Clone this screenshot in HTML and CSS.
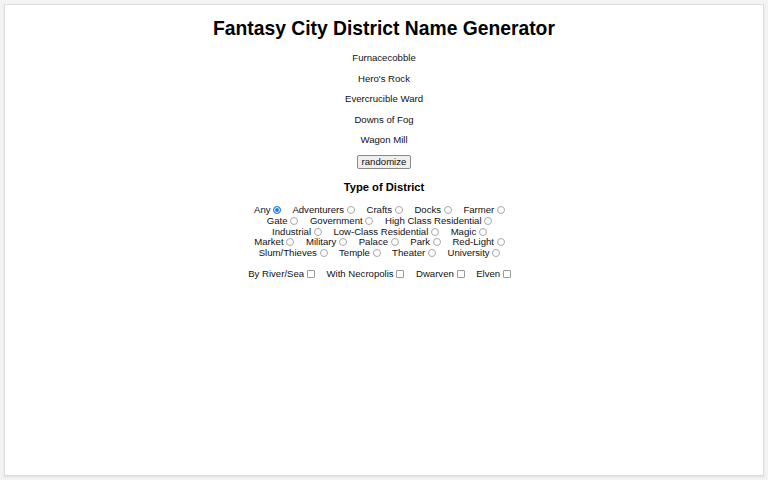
FILE: index.html
```html
<!DOCTYPE html>
<html lang="en">
<head>
<meta charset="utf-8">
<title>Fantasy City District Name Generator</title>
<link rel="stylesheet" href="styles.css">
</head>
<body>
<main class="card">
  <h1 class="title">Fantasy City District Name Generator</h1>
  <div class="names">
    <p class="name">Furnacecobble</p>
    <p class="name">Hero's Rock</p>
    <p class="name">Evercrucible Ward</p>
    <p class="name">Downs of Fog</p>
    <p class="name">Wagon Mill</p>
  </div>
  <p class="actions"><button type="button" class="btn">randomize</button></p>
  <h3 class="section">Type of District</h3>
  <form class="options">
    <div class="types">
      <label class="opt">Any <input type="radio" name="type" checked></label>
      <label class="opt">Adventurers <input type="radio" name="type"></label>
      <label class="opt">Crafts <input type="radio" name="type"></label>
      <label class="opt">Docks <input type="radio" name="type"></label>
      <label class="opt">Farmer <input type="radio" name="type"></label>
      <label class="opt">Gate <input type="radio" name="type"></label>
      <label class="opt">Government <input type="radio" name="type"></label>
      <label class="opt">High Class Residential <input type="radio" name="type"></label>
      <label class="opt">Industrial <input type="radio" name="type"></label>
      <label class="opt">Low-Class Residential <input type="radio" name="type"></label>
      <label class="opt">Magic <input type="radio" name="type"></label>
      <label class="opt">Market <input type="radio" name="type"></label>
      <label class="opt">Military <input type="radio" name="type"></label>
      <label class="opt">Palace <input type="radio" name="type"></label>
      <label class="opt">Park <input type="radio" name="type"></label>
      <label class="opt">Red-Light <input type="radio" name="type"></label>
      <label class="opt">Slum/Thieves <input type="radio" name="type"></label>
      <label class="opt">Temple <input type="radio" name="type"></label>
      <label class="opt">Theater <input type="radio" name="type"></label>
      <label class="opt">University <input type="radio" name="type"></label>
    </div>
    <p class="flags">
      <label class="opt">By River/Sea <input type="checkbox"></label>
      <label class="opt">With Necropolis <input type="checkbox"></label>
      <label class="opt">Dwarven <input type="checkbox"></label>
      <label class="opt">Elven <input type="checkbox"></label>
    </p>
  </form>
</main>
</body>
</html>
```

FILE: styles.css
```css
html, body {
  height: 100%;
}

body {
  margin: 0;
  padding: 4px;
  box-sizing: border-box;
  background: #f3f3f3;
  font-family: "Liberation Sans", Arial, sans-serif;
  font-size: 9.6px;
  color: #111;
}

.card {
  height: 100%;
  box-sizing: border-box;
  background: #fff;
  border: 1px solid #dcdcdc;
  box-shadow: 0 1px 2px rgba(0, 0, 0, 0.08);
  text-align: center;
  overflow: hidden;
}

.title {
  font-size: 19.3px;
  margin: 13px 0 12px;
  color: #000;
}

.name {
  margin: 9.6px 0;
}

.actions {
  margin: 9.6px 0;
}

.btn {
  font-family: inherit;
  font-size: 9.6px;
  color: #111;
  background: #efefef;
  border: 1px solid #8a8a8a;
  border-radius: 2px;
  padding: 1px 4px;
  line-height: 10px;
}

.section {
  font-size: 11.2px;
  margin: 12px 0 12px;
  color: #000;
}

.options {
  margin: 0;
}

.types {
  width: 266px;
  margin: 0 auto;
  line-height: 10.8px;
}

.opt {
  white-space: nowrap;
  margin-right: 8px;
}

/* small hand-drawn radio and checkbox controls */
.opt input {
  -webkit-appearance: none;
  appearance: none;
  box-sizing: border-box;
  width: 8px;
  height: 8px;
  margin: 0 1px 0 0;
  vertical-align: -1px;
  border: 1px solid #a8a8a8;
  background: #fff;
}

.opt input[type="radio"] {
  border-radius: 50%;
}

.opt input[type="radio"]:checked {
  border-color: #1e7bf0;
  background: #1e7bf0;
  box-shadow: inset 0 0 0 1px #fff;
}

.opt input[type="checkbox"] {
  border-radius: 1px;
  border-color: #9a9a9a;
}

.flags {
  margin: 9px 0;
}
```
